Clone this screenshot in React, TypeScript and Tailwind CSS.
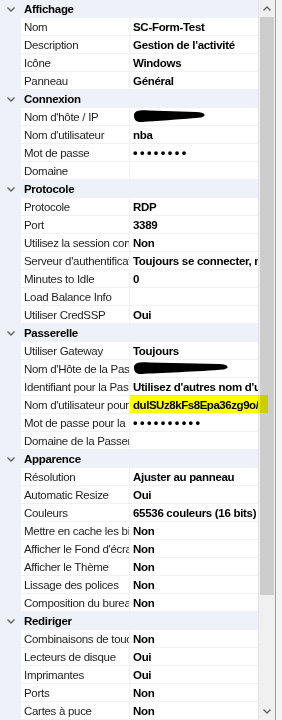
type Row = { name: string; value?: string; dots?: number; blot?: boolean };
type Section = { title: string; rows: Row[] };

const sections: Section[] = [
  {
    title: "Affichage",
    rows: [
      { name: "Nom", value: "SC-Form-Test" },
      { name: "Description", value: "Gestion de l'activité" },
      { name: "Icône", value: "Windows" },
      { name: "Panneau", value: "Général" },
    ],
  },
  {
    title: "Connexion",
    rows: [
      { name: "Nom d'hôte / IP", blot: true },
      { name: "Nom d'utilisateur", value: "nba" },
      { name: "Mot de passe", dots: 8 },
      { name: "Domaine", value: "" },
    ],
  },
  {
    title: "Protocole",
    rows: [
      { name: "Protocole", value: "RDP" },
      { name: "Port", value: "3389" },
      { name: "Utilisez la session console", value: "Non" },
      { name: "Serveur d'authentification", value: "Toujours se connecter, même si l'authentification échoue" },
      { name: "Minutes to Idle", value: "0" },
      { name: "Load Balance Info", value: "" },
      { name: "Utiliser CredSSP", value: "Oui" },
    ],
  },
  {
    title: "Passerelle",
    rows: [
      { name: "Utiliser Gateway", value: "Toujours" },
      { name: "Nom d'Hôte de la Passerelle", blot: true },
      { name: "Identifiant pour la Passerelle", value: "Utilisez d'autres nom d'utilisateur" },
      { name: "Nom d'utilisateur pour la passerelle", value: "duISUz8kFs8Epa36zg9o/" },
      { name: "Mot de passe pour la passerelle", dots: 10 },
      { name: "Domaine de la Passerelle", value: "" },
    ],
  },
  {
    title: "Apparence",
    rows: [
      { name: "Résolution", value: "Ajuster au panneau" },
      { name: "Automatic Resize", value: "Oui" },
      { name: "Couleurs", value: "65536 couleurs (16 bits)" },
      { name: "Mettre en cache les bitmaps", value: "Non" },
      { name: "Afficher le Fond d'écran", value: "Non" },
      { name: "Afficher le Thème", value: "Non" },
      { name: "Lissage des polices", value: "Non" },
      { name: "Composition du bureau", value: "Non" },
    ],
  },
  {
    title: "Rediriger",
    rows: [
      { name: "Combinaisons de touches", value: "Non" },
      { name: "Lecteurs de disque", value: "Oui" },
      { name: "Imprimantes", value: "Oui" },
      { name: "Ports", value: "Non" },
      { name: "Cartes à puce", value: "Non" },
    ],
  },
];

function Chevron({ up = false }: { up?: boolean }) {
  return (
    <svg width="8" height="5" viewBox="0 0 8 5" className={up ? "rotate-180" : ""}>
      <path d="M0.5 0.5 L4 4 L7.5 0.5" fill="none" stroke="#606060" strokeWidth="1.4" />
    </svg>
  );
}

// marker scribble used to hide host names
function Blot({ w }: { w: number }) {
  return (
    <svg width={w} height="14" viewBox={`0 0 ${w} 14`}>
      <path
        d={`M1 6.5 C1 1.5 7 1 16 1.5 L${w - 12} 3 C${w - 2} 3.5 ${w - 1} 7 ${w - 7} 8.5 C${w - 30} 10.5 22 12 9 13 C3 13.5 1 10.5 1 6.5 Z`}
        fill="#000"
      />
    </svg>
  );
}

function PropRow({ row }: { row: Row }) {
  return (
    <div className="flex h-[18px]">
      <div className="w-[21px] shrink-0" />
      <div className="w-[108px] h-[17px] shrink-0 bg-white pl-[3px] overflow-hidden whitespace-nowrap leading-[18px] text-[#1e1e1e]">
        {row.name}
      </div>
      <div className="w-px shrink-0" />
      <div className="flex-1 min-w-0 h-[17px] bg-white pl-[3px] overflow-hidden whitespace-nowrap leading-[18px] font-bold text-black">
        {row.blot ? (
          <div className="pt-[1px]">
            <Blot w={row.name.startsWith("Nom d'Hôte") ? 98 : 75} />
          </div>
        ) : row.dots ? (
          <span className="text-[13px] tracking-[2.4px]">{"•".repeat(row.dots)}</span>
        ) : (
          <span className={row.value?.startsWith("duIS") ? "tracking-[-0.45px]" : ""}>{row.value}</span>
        )}
      </div>
    </div>
  );
}

export default function App() {
  return (
    <div
      className="relative w-[282px] h-[720px] overflow-hidden bg-[#f0f0f0] text-[11.5px] tracking-[-0.3px] flex"
      style={{ fontFamily: '"Liberation Sans", Arial, sans-serif' }}
    >
      <div className="w-[258px] h-full bg-[#eef2f8] flex flex-col">
        {sections.map((s) => (
          <div key={s.title}>
            <div className="flex items-center h-[18px]">
              <div className="w-[21px] flex justify-center">
                <Chevron />
              </div>
              <div className="pl-[3px] font-bold text-black leading-[18px]">{s.title}</div>
            </div>
            {s.rows.map((r) => (
              <PropRow key={r.name} row={r} />
            ))}
          </div>
        ))}
      </div>
      <div className="w-[17px] h-full bg-[#f0f0f0] flex flex-col border-l border-[#e3e3e3]">
        <div className="h-[17px] flex items-center justify-center">
          <Chevron up />
        </div>
        <div className="h-[578px] mx-[1px] bg-[#cdcdcd]" />
        <div className="flex-1" />
        <div className="h-[17px] flex items-center justify-center">
          <Chevron />
        </div>
      </div>
      <div className="w-px h-full bg-[#a0a0a0]" />
      <div className="flex-1 h-full bg-[#f4f4f4]" />
      <div className="absolute left-[130px] top-[395px] w-[138px] h-[18px] bg-[#ffff00] mix-blend-multiply" />
    </div>
  );
}
